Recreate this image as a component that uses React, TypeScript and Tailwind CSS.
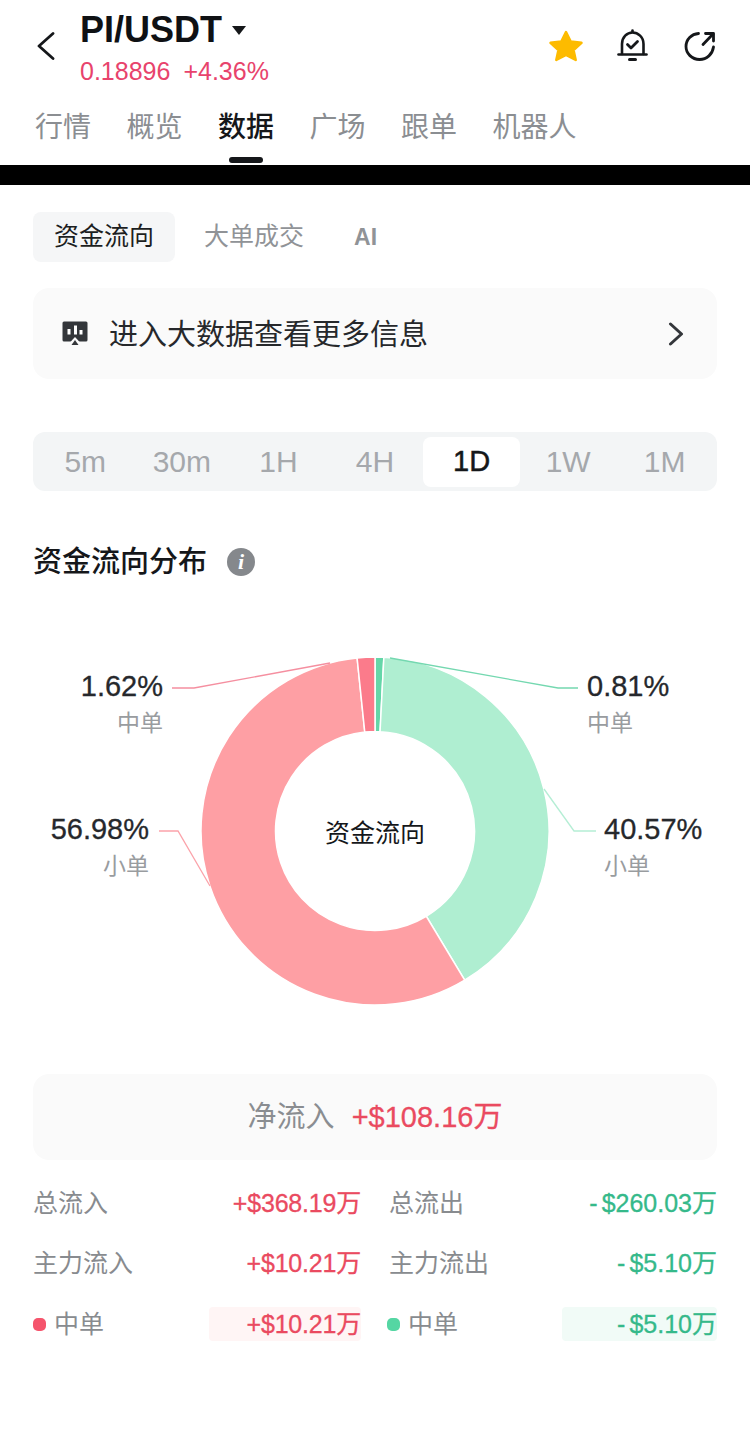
import React from 'react';

const FONT = 'font-["Liberation_Sans","Noto_Sans_CJK_SC",sans-serif]';

const navTabs = ['行情', '概览', '数据', '广场', '跟单', '机器人'];
const periods = ['5m', '30m', '1H', '4H', '1D', '1W', '1M'];

// donut center (375,190) in chart coords
function slice(startPct: number, endPct: number, outer = 174, inner = 99.5) {
  const cx = 375;
  const cy = 190;
  const a0 = (startPct / 100) * Math.PI * 2;
  const a1 = (endPct / 100) * Math.PI * 2;
  const pt = (r: number, a: number) => `${cx + r * Math.sin(a)} ${cy - r * Math.cos(a)}`;
  const large = endPct - startPct > 50 ? 1 : 0;
  return `M${pt(outer, a0)}A${outer} ${outer} 0 ${large} 1 ${pt(outer, a1)}L${pt(inner, a1)}A${inner} ${inner} 0 ${large} 0 ${pt(inner, a0)}Z`;
}

function Bell() {
  return (
    <svg width="32" height="34" viewBox="0 0 32 34" fill="none" stroke="#15171a" strokeWidth="2.6" strokeLinecap="round" strokeLinejoin="round">
      <path d="M5 25V15C5 8 10 3.500 15.500 3.500S26.500 8 26.500 15V25" />
      <path d="M1.500 25.500H29.500" />
      <path d="M15.500 1.500V3" />
      <path d="M12.500 30.500H18.500" strokeWidth="3" />
      <path d="M10.500 15.500L14 19L20.500 12.500" strokeWidth="2.800" />
    </svg>
  );
}

function Share() {
  return (
    <svg width="32" height="32" viewBox="0 0 32 32" fill="none" stroke="#15171a" strokeWidth="2.800" strokeLinecap="round" strokeLinejoin="round">
      <path d="M14.500 3.500C7.500 4 2 9.500 2 16.500S8 29.500 15.500 29.500S28.500 24 29.500 17" />
      <path d="M19 14.500L29 4" />
      <path d="M21.500 3.500H29.500V11" />
    </svg>
  );
}

function Row({ label, value, color, dot, chip, shift }: { label: string; value: string; color: string; dot?: string; chip?: string; shift?: boolean }) {
  const negative = value[0] === '-';
  return (
    <div className="flex h-[34px] items-center justify-between">
      <div className={`flex items-center gap-[8px] text-[25px] leading-none text-[#888b8f] ${shift ? '-ml-[2px]' : ''}`}>
        {dot && <span className={`h-[13px] w-[13px] rounded-[5px] ${dot}`} />}
        <span>{label}</span>
      </div>
      <div className={`flex h-[34px] items-center justify-end rounded-[4px] text-[25px] leading-none [-webkit-text-stroke:0.3px_currentColor] ${color} ${chip ?? ''}`}>
        {negative && <span className="mr-[4px]">-</span>}
        <span className={negative ? '' : 'tracking-[-0.2px]'}>{negative ? value.slice(1) : value}</span>
      </div>
    </div>
  );
}

function ChartLabel({ value, name, className, tall }: { value: string; name: string; className: string; tall?: boolean }) {
  return (
    <div className={`absolute ${className}`}>
      <div className="text-[29px] leading-[36px] text-[#26282c] [-webkit-text-stroke:0.3px_#26282c]">{value}</div>
      <div className={`text-[23px] leading-[36px] text-[#999c9f] ${tall ? 'mt-[1px]' : 'mt-[1px]'}`}>{name}</div>
    </div>
  );
}

export default function App() {
  return (
    <div className={`h-[1442px] w-[750px] overflow-hidden bg-white ${FONT}`}>
      {/* header */}
      <div className="flex h-[92px] items-start pl-[35px] pr-[34px]">
        <svg className="mt-[32px]" width="22" height="28" viewBox="0 0 22 28" fill="none" stroke="#15171a" strokeWidth="2.800" strokeLinecap="round" strokeLinejoin="round">
          <path d="M18 1.500L4 14L18 26.500" />
        </svg>
        <div className="ml-[23px] flex flex-col">
          <div className="mt-[9px] flex items-center">
            <span className="text-[36px] leading-[42px] font-bold text-[#0f1114]">PI/USDT</span>
            <span className="ml-[10px] h-0 w-0 border-x-[7.5px] border-t-[9px] border-x-transparent border-t-[#15171a]" />
          </div>
          <div className="mt-[6px] flex gap-[13px] text-[25px] leading-[28px] text-[#e8436c]">
            <span>0.18896</span>
            <span>+4.36%</span>
          </div>
        </div>
        <div className="ml-auto mt-[29px] flex items-center">
          <svg width="36" height="32" viewBox="0 0 36 32" fill="#fdbb00" stroke="#fdbb00" strokeWidth="2.500" strokeLinejoin="round">
            <path d="M18 2L22.700 11.500L33.500 12.800L25.600 20.200L27.700 30L18 25L8.300 30L10.400 20.200L2.500 12.800L13.300 11.500Z" />
          </svg>
          <div className="ml-[33px]"><Bell /></div>
          <div className="ml-[35px]"><Share /></div>
        </div>
      </div>

      {/* nav tabs */}
      <div className="flex h-[72px] gap-[35.500px] pl-[35px]">
        {navTabs.map((t) => (
          <div key={t} className={`relative pt-[19px] text-[28px] leading-[34px] ${t === '数据' ? 'font-medium text-[#15171a]' : 'text-[#8b8e92]'}`}>
            {t}
            {t === '数据' && <span className="absolute left-[11px] top-[65px] h-[6px] w-[34px] rounded-full bg-[#15171a]" />}
          </div>
        ))}
      </div>
      <div className="mt-[1px] h-[20px] bg-black" />

      <div className="px-[33px]">
        {/* sub tabs */}
        <div className="mt-[27px] flex h-[50px] items-center">
          <div className="flex h-[50px] w-[142px] items-center justify-center rounded-[8px] bg-[#f5f6f7] text-[25px] text-[#1c1e21]">资金流向</div>
          <div className="ml-[29px] text-[25px] text-[#909397]">大单成交</div>
          <div className="ml-[50px] text-[23px] font-bold text-[#909397]">AI</div>
        </div>

        {/* big data entry */}
        <div className="mt-[26px] flex h-[91px] items-center rounded-[16px] bg-[#fafafa] pl-[29px] pr-[33px]">
          <svg width="26" height="26" viewBox="0 0 26 26">
            <rect x="0.500" y="0.500" width="25" height="20" rx="1.500" fill="#33363a" />
            <path d="M13 16L6.500 23H19.500Z" fill="#fafafa" />
            <path d="M13 19L9.500 24H16.500Z" fill="#33363a" />
            <path d="M7 8V13.500M13.500 4.500V13.500M19 9V13.500" stroke="#fff" strokeWidth="3" />
          </svg>
          <span className="ml-[21px] mt-[4px] text-[29px] leading-none text-[#26282b]">进入大数据查看更多信息</span>
          <svg className="ml-auto" width="16" height="24" viewBox="0 0 16 24" fill="none" stroke="#33363a" strokeWidth="3" strokeLinecap="round" strokeLinejoin="round">
            <path d="M2.500 2L13.500 12L2.500 22" />
          </svg>
        </div>

        {/* period selector */}
        <div className="mt-[53px] grid h-[59px] grid-cols-7 items-center rounded-[12px] bg-[#f3f5f6] px-[4px]">
          {periods.map((p) => (
            <div
              key={p}
              className={`flex h-[50px] items-center justify-center rounded-[8px] leading-none ${p === '1D' ? 'bg-white text-[29px] text-[#15171a] [-webkit-text-stroke:0.5px_#15171a]' : 'text-[30px] text-[#a5a8ac]'}`}
            >
              {p}
            </div>
          ))}
        </div>

        {/* section title */}
        <div className="mt-[51px] flex h-[40px] items-center">
          <span className="text-[29px] leading-none font-medium text-[#15171a]">资金流向分布</span>
          <span className='ml-[20px] flex h-[28px] w-[28px] items-center justify-center rounded-full bg-[#85888c] font-["Liberation_Serif",serif] text-[22px] font-bold italic leading-none text-white'>i</span>
        </div>
      </div>

      {/* donut chart */}
      <div className="relative mt-[59px] h-[380px] w-full">
        <svg className="absolute inset-0" width="750" height="380" viewBox="0 0 750 380" fill="none">
          <path d={slice(0, 0.81)} fill="#64d6a8" stroke="#fff" strokeWidth="1.500" />
          <path d={slice(0.81, 41.38)} fill="#afeed1" stroke="#fff" strokeWidth="1.500" />
          <path d={slice(41.38, 98.36)} fill="#fe9fa4" stroke="#fff" strokeWidth="1.500" />
          <path d={slice(98.36, 100)} fill="#fb7b8b" stroke="#fff" strokeWidth="1.500" />
          <path d="M172 47H194L330 22" stroke="#f58fa0" strokeWidth="1.300" />
          <path d="M578 47H558L390 17" stroke="#74d8b0" strokeWidth="1.300" />
          <path d="M596 190H574L544 148" stroke="#b5eed5" strokeWidth="1.300" />
          <path d="M159 190H178L210 245" stroke="#fba3aa" strokeWidth="1.300" />
        </svg>
        <div className="absolute left-[275px] top-[172px] w-[200px] text-center text-[25px] leading-[40px] text-[#15171a]">资金流向</div>
        <ChartLabel value="1.62%" name="中单" className="right-[587px] top-[27px] text-right" />
        <ChartLabel value="0.81%" name="中单" className="left-[587px] top-[27px]" />
        <ChartLabel value="56.98%" name="小单" className="right-[601px] top-[170px] text-right" tall />
        <ChartLabel value="40.57%" name="小单" className="left-[604px] top-[170px]" tall />
      </div>

      <div className="px-[33px]">
        {/* net inflow */}
        <div className="mt-[53px] flex h-[86px] items-center justify-center gap-[17px] rounded-[16px] bg-[#fafafa] text-[29px] leading-none">
          <span className="text-[#8a8d91]">净流入</span>
          <span className="text-[#ea4a60] [-webkit-text-stroke:0.3px_#ea4a60]">+$108.16万</span>
        </div>

        {/* flow table */}
        <div className="mt-[26px] grid grid-cols-2 gap-x-[28px] gap-y-[26.500px]">
          <Row label="总流入" value="+$368.19万" color="text-[#ea4a60]" />
          <Row label="总流出" value="-$260.03万" color="text-[#35b98a]" />
          <Row label="主力流入" value="+$10.21万" color="text-[#ea4a60]" />
          <Row label="主力流出" value="-$5.10万" color="text-[#35b98a]" />
          <Row label="中单" value="+$10.21万" color="text-[#ea4a60]" dot="bg-[#f5546c]" chip="w-[152px] bg-[#fff5f5]" />
          <Row label="中单" value="-$5.10万" color="text-[#35b98a]" dot="bg-[#55d6a3]" chip="w-[155px] bg-[#f1fbf7]" shift />
        </div>
      </div>
    </div>
  );
}
